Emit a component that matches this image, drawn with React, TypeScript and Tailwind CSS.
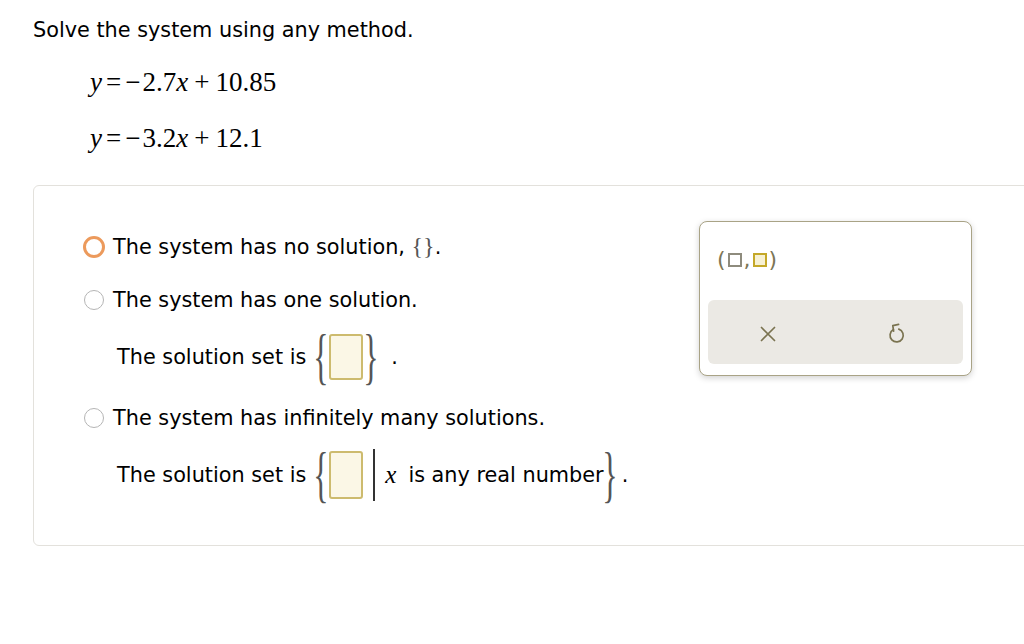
function Brace({ side }: { side: "l" | "r" }) {
  return (
    <span className="inline-flex h-[54px] w-[12px] items-center justify-center overflow-visible">
      <span className="inline-block scale-x-[0.55] scale-y-[1.05] font-['Liberation_Serif',serif] text-[58px] leading-none text-[#555]">
        {side === "l" ? "{" : "}"}
      </span>
    </span>
  );
}

function AnswerBox({ h = "h-[46px]" }: { h?: string }) {
  return <span className={`inline-block w-[34px] ${h} rounded-[3px] border-2 border-[#cdbb6e] bg-[#fbf7e6]`} />;
}

function Radio({ active }: { active?: boolean }) {
  return active ? (
    <span className="h-[22px] w-[22px] shrink-0 rounded-full border-[3px] border-[#ec9a5c] bg-white" />
  ) : (
    <span className="ml-[1px] mr-[1px] h-[20px] w-[20px] shrink-0 rounded-full border border-[#b5b5b5] bg-white" />
  );
}

export default function App() {
  return (
    <div className="h-[644px] w-[1024px] overflow-hidden bg-white font-['DejaVu_Sans',Verdana,sans-serif] text-black">
      <div className="px-[33px] pt-[17px] text-[20.8px] leading-[26px]">Solve the system using any method.</div>

      <div className="flex flex-col gap-[30px] pl-[90px] pt-[26px] font-['Liberation_Serif',serif] text-[27px] leading-[26px]">
        <div>
          <i>y</i>
          <span className="mx-[4px]">=</span>
          <span className="mr-[2px]">−</span>2.7<i>x</i>
          <span className="mx-[6px]">+</span>10.85
        </div>
        <div>
          <i>y</i>
          <span className="mx-[4px]">=</span>
          <span className="mr-[2px]">−</span>3.2<i>x</i>
          <span className="mx-[6px]">+</span>12.1
        </div>
      </div>

      <div className="ml-[33px] mt-[34px] flex h-[361px] w-[1010px] rounded-[6px] border border-[#e3e1dc] pt-[35px]">
        <div className="flex w-[665px] flex-col pl-[49px] pt-[12px] text-[20.8px] leading-[26px]">
          <div className="flex items-center gap-[8px]">
            <Radio active />
            <span>
              The system has no solution,{" "}
              <span className="font-['Liberation_Serif',serif] text-[24px] text-[#555]">{"{}"}</span>.
            </span>
          </div>

          <div className="mt-[27px] flex items-center gap-[8px]">
            <Radio />
            <span>The system has one solution.</span>
          </div>

          <div className="mt-[17px] flex items-center pl-[34px]">
            <span>The solution set is</span>
            <span className="ml-[9px] flex items-center">
              <Brace side="l" />
              <span className="mx-[2px] flex"><AnswerBox /></span>
              <Brace side="r" />
            </span>
            <span className="ml-[14px]">.</span>
          </div>

          <div className="mt-[21px] flex items-center gap-[8px]">
            <Radio />
            <span>The system has infinitely many solutions.</span>
          </div>

          <div className="mt-[17px] flex items-center pl-[34px]">
            <span>The solution set is</span>
            <span className="ml-[9px] flex items-center">
              <Brace side="l" />
              <span className="mx-[2px] flex"><AnswerBox h="h-[48px]" /></span>
              <span className="ml-[8px] inline-block h-[52px] w-[2px] bg-[#333]" />
              <span className="ml-[10px] font-['Liberation_Serif',serif] text-[25px] italic">x</span>
              <span className="ml-[12px]">is any real number</span>
              <Brace side="r" />
            </span>
            <span className="ml-[6px]">.</span>
          </div>
        </div>

        <div className="h-[155px] w-[273px] rounded-[8px] border border-[#a9a386] bg-white shadow-[0_2px_6px_rgba(0,0,0,0.18)]">
          <div className="flex items-center px-[17px] pt-[24px] font-['DejaVu_Sans',sans-serif] text-[22px] leading-[28px] text-[#7d7656]">
            <span>(</span>
            <span className="mx-[2px] inline-block h-[14px] w-[14px] border-2 border-[#8e8b7d] bg-white" />
            <span>,</span>
            <span className="mx-[2px] inline-block h-[14px] w-[14px] border-2 border-[#c4a828] bg-[#f7f1d3]" />
            <span>)</span>
          </div>
          <div className="mx-[8px] mt-[26px] flex h-[64px] items-center rounded-[6px] bg-[#ebe9e4] pt-[4px]">
            <span className="ml-[50px] flex">
              <svg width="20" height="20" viewBox="0 0 20 20" fill="none" stroke="#7a7350" strokeWidth="1.7" strokeLinecap="round">
                <path d="M3.5 3.5 L16.5 16.5 M16.5 3.5 L3.5 16.5" />
              </svg>
            </span>
            <span className="ml-[108px] flex">
              <svg width="24" height="26" viewBox="0 0 24 26" fill="none" stroke="#7a7350" strokeWidth="1.7" strokeLinecap="round" strokeLinejoin="round">
                <path d="M12.6 3.4 L6.8 4.6 L7.6 10.2" />
                <path d="M7.4 8.6 A6.6 6.6 0 1 0 12.8 8.1" />
              </svg>
            </span>
          </div>
        </div>
      </div>
    </div>
  );
}
